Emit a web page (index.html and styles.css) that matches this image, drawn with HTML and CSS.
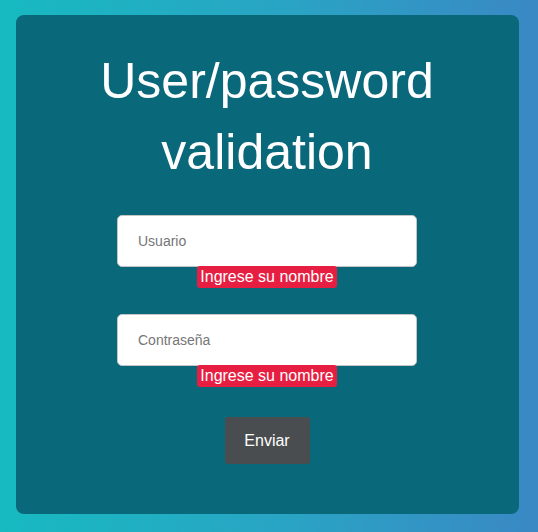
FILE: index.html
```html
<!DOCTYPE html>
<html lang="es">
<head>
<meta charset="utf-8">
<title>User/password validation</title>
<link rel="stylesheet" href="styles.css">
</head>
<body>
  <main class="card">
    <h1 class="title">User/password validation</h1>
    <form class="form" novalidate>
      <div class="field">
        <input class="input" type="text" placeholder="Usuario">
        <span class="error">Ingrese su nombre</span>
      </div>
      <div class="field">
        <input class="input" type="password" placeholder="Contraseña">
        <span class="error">Ingrese su nombre</span>
      </div>
      <button class="submit" type="button">Enviar</button>
    </form>
  </main>
</body>
</html>
```
FILE: styles.css
```css
* {
  box-sizing: border-box;
}

html,
body {
  height: 100%;
}

body {
  margin: 0;
  padding: 15px 19px 18px 16px;
  font-family: "Liberation Sans", Arial, sans-serif;
  background: linear-gradient(90deg, #17bac1 0%, #2aa3c4 55%, #3a88c4 100%);
}

.card {
  height: 499px;
  background: #0a687b;
  border-radius: 8px;
  padding: 31px 20px 0 19px;
  display: flex;
  flex-direction: column;
  align-items: center;
}

.title {
  margin: 0;
  width: 380px;
  text-align: center;
  color: #ffffff;
  font-weight: 400;
  font-size: 50px;
  line-height: 71px;
}

.form {
  margin-top: 27px;
  display: flex;
  flex-direction: column;
  align-items: center;
}

.field {
  display: flex;
  flex-direction: column;
  align-items: center;
  margin-bottom: 26px;
}

.input {
  width: 300px;
  height: 52px;
  padding: 0 20px;
  border: 1px solid #c4c4c4;
  border-radius: 5px;
  background: #ffffff;
  font-family: inherit;
  font-size: 14px;
  color: #333333;
}

.input::placeholder {
  color: #767676;
}

.error {
  margin-top: -1px;
  padding: 2px 3px;
  background: #e61f42;
  color: #ffffff;
  font-size: 16px;
  line-height: 18px;
  border-radius: 3px;
}

.submit {
  margin-top: 4px;
  width: 85px;
  height: 47px;
  border: none;
  border-radius: 3px;
  background: #4a4d50;
  color: #ffffff;
  font-family: inherit;
  font-size: 16px;
}
```
